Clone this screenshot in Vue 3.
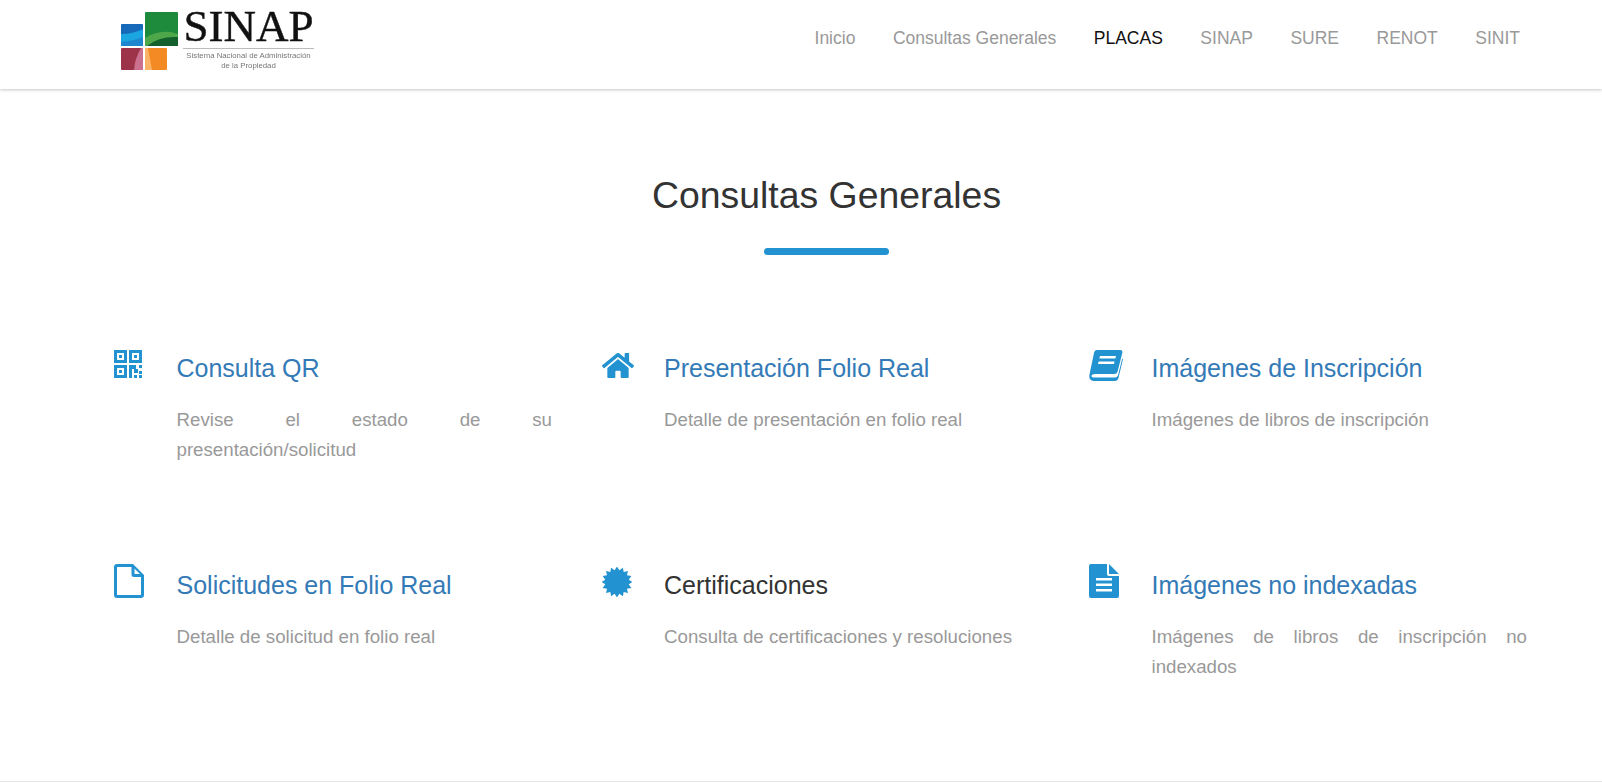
<template>
  <div class="page">
    <header class="topbar">
      <div class="logo">
        <svg class="logo-mark" viewBox="0 0 58 58" width="58" height="58">
          <rect x="24" y="0" width="33" height="34" rx="1" fill="#1d8a3c" />
          <path d="M24 34V26Q40 16 57 22V34Z" fill="#4ea84a" />
          <path d="M26 34Q38 24 57 25V34Z" fill="#14602c" />
          <rect x="0" y="12" width="22" height="22" rx="1" fill="#1669b8" />
          <path d="M0 22Q12 22 22 17V26Q10 30 0 34Z" fill="#1ba6e2" />
          <path d="M0 30Q12 29 22 25V34H0Z" fill="#1e86cc" />
          <rect x="0" y="36" width="22" height="22" rx="1" fill="#9c3348" />
          <path d="M13 58Q14 46 20 36H22V58Z" fill="#cc7090" />
          <rect x="24" y="36" width="22" height="22" rx="1" fill="#f38a24" />
          <path d="M24 36H27L31 58H24Z" fill="#fbb367" />
        </svg>
        <div class="logo-text">
          <span class="logo-name">SINAP</span>
          <span class="logo-sub">Sistema Nacional de Administración<br />de la Propiedad</span>
        </div>
      </div>
      <nav class="menu">
        <a v-for="link in links" :key="link" class="menu-link" :class="{ active: link === 'PLACAS' }">{{ link }}</a>
      </nav>
    </header>

    <main class="content">
      <h1 class="title">Consultas Generales</h1>
      <div class="title-bar"></div>

      <section class="services">
        <article class="service">
          <svg class="icon qr" viewBox="0 0 28 28">
            <path d="M0 0H13V13H0ZM3 3V10H10V3ZM5 5H8V8H5ZM15 0H28V13H15ZM18 3V10H25V3ZM20 5H23V8H20ZM0 15H13V28H0ZM3 18V25H10V18ZM5 20H8V23H5ZM15 15H22V19H24V23H20V19H18V28H15ZM25 15H28V18H25ZM25 21H28V24H25ZM20 25H23V28H20ZM25 25H28V28H25Z" fill-rule="evenodd" />
          </svg>
          <div>
            <h2 class="service-title">Consulta QR</h2>
            <p class="service-text"><span class="full-line">Revise el estado de su</span> presentación/solicitud</p>
          </div>
        </article>

        <article class="service">
          <svg class="icon home" viewBox="0 32 576 448">
            <path d="M280.37 148.26L96 300.11V464a16 16 0 0 0 16 16l112.06-.29a16 16 0 0 0 15.92-16V368a16 16 0 0 1 16-16h64a16 16 0 0 1 16 16v95.64a16 16 0 0 0 16 16.05L464 480a16 16 0 0 0 16-16V300L295.67 148.26a12.19 12.19 0 0 0-15.3 0zM571.6 251.47L488 182.56V44.05a12 12 0 0 0-12-12h-56a12 12 0 0 0-12 12v72.61L318.47 43a48 48 0 0 0-61 0L4.34 251.47a12 12 0 0 0-1.6 16.9l25.5 31A12 12 0 0 0 45.15 301l235.22-193.74a12.19 12.19 0 0 1 15.3 0L530.9 301a12 12 0 0 0 16.9-1.6l25.5-31a12 12 0 0 0-1.7-16.93z" />
          </svg>
          <div>
            <h2 class="service-title">Presentación Folio Real</h2>
            <p class="service-text">Detalle de presentación en folio real</p>
          </div>
        </article>

        <article class="service">
          <svg class="icon book" viewBox="0 0 34 31">
            <path d="M8 0H31Q34 0 33.3 3L28.6 21.5Q28 24 25 24H5.5Q3.4 24 2.5 25.6 2 27 4 27.5H26Q28 27.5 29 25.5L33.2 8.5 34 9 29.6 27.5Q29 31 25.5 31H5Q1.5 31 .5 28 0 26 .7 23.5L5 3Q5.6 0 8 0ZM11 6 10.4 8.5H26.4L27 6ZM9.6 11.5 9 14H25L25.6 11.5Z" fill-rule="evenodd" />
          </svg>
          <div>
            <h2 class="service-title">Imágenes de Inscripción</h2>
            <p class="service-text">Imágenes de libros de inscripción</p>
          </div>
        </article>

        <article class="service">
          <svg class="icon file" viewBox="0 0 30 34">
            <path d="M3 0H19L30 11V31Q30 34 27 34H3Q0 34 0 31V3Q0 0 3 0ZM3.5 3Q3 3 3 3.5V30.5Q3 31 3.5 31H26.5Q27 31 27 30.5V13H20Q17.5 13 17.5 10.5V3ZM20.5 4.5V10H26Z" fill-rule="evenodd" />
          </svg>
          <div>
            <h2 class="service-title">Solicitudes en Folio Real</h2>
            <p class="service-text">Detalle de solicitud en folio real</p>
          </div>
        </article>

        <article class="service">
          <svg class="icon cert" viewBox="0 0 30 30">
            <path :d="starPath" />
          </svg>
          <div>
            <h2 class="service-title dark">Certificaciones</h2>
            <p class="service-text">Consulta de certificaciones y resoluciones</p>
          </div>
        </article>

        <article class="service">
          <svg class="icon doc" viewBox="0 0 30 34">
            <path d="M2 0H18V10Q18 12 20 12H30V32Q30 34 28 34H2Q0 34 0 32V2Q0 0 2 0ZM7 14V16.5H23V14ZM7 19.5V22H23V19.5ZM7 25V27.5H23V25ZM20 0 30 10H20Z" fill-rule="evenodd" />
          </svg>
          <div>
            <h2 class="service-title">Imágenes no indexadas</h2>
            <p class="service-text justify">Imágenes de libros de inscripción no indexados</p>
          </div>
        </article>
      </section>
    </main>
  </div>
</template>

<script setup>
import { computed } from 'vue'

const links = ['Inicio', 'Consultas Generales', 'PLACAS', 'SINAP', 'SURE', 'RENOT', 'SINIT']

// 16 point badge for the certificate icon
const starPath = computed(() => {
  const points = []
  for (let i = 0; i < 32; i++) {
    const r = i % 2 === 0 ? 15.5 : 12
    const a = (Math.PI * i) / 16
    points.push(`${(15 + r * Math.sin(a)).toFixed(2)} ${(15 - r * Math.cos(a)).toFixed(2)}`)
  }
  return `M${points.join('L')}Z`
})
</script>

<style scoped>
.page {
  height: 782px;
  overflow: hidden;
  box-sizing: border-box;
  border-bottom: 1px solid #e7e7e7;
  font-family: "Liberation Sans", Arial, sans-serif;
  background: #fff;
}

.topbar {
  height: 89px;
  box-sizing: border-box;
  padding: 12px 82px 0 121px;
  display: flex;
  justify-content: space-between;
  align-items: flex-start;
  box-shadow: 0 1px 3px rgba(0, 0, 0, 0.22);
}

.logo {
  display: flex;
  gap: 4px;
  filter: blur(0.4px);
}

.logo-text {
  display: flex;
  flex-direction: column;
  align-items: center;
  width: 131px;
}

.logo-name {
  width: 100%;
  text-align: center;
  font-family: "Liberation Serif", serif;
  font-size: 45px;
  line-height: 29px;
  padding-bottom: 7px;
  color: #111;
  -webkit-text-stroke: 0.4px #111;
  border-bottom: 1px solid #bbb;
}

.logo-sub {
  margin-top: 2px;
  font-size: 7.8px;
  line-height: 9.5px;
  color: #777;
  text-align: center;
  white-space: nowrap;
}

.menu {
  display: flex;
  gap: 37.5px;
  padding-top: 14px;
}

.menu-link {
  font-size: 17.5px;
  line-height: 24px;
  color: #999;
}

.menu-link.active {
  color: #111;
}

.content {
  width: 1425px;
  margin-left: 114px;
}

.title {
  margin: 84px 0 0;
  font-size: 37.4px;
  line-height: 44px;
  font-weight: 400;
  color: #333;
  text-align: center;
}

.title-bar {
  width: 125px;
  height: 7px;
  margin: 31px auto 0;
  border-radius: 4px;
  background: #2392d0;
}

.services {
  display: grid;
  grid-template-columns: repeat(3, 438px);
  column-gap: 49.5px;
  grid-auto-rows: 217px;
  margin-top: 95px;
}

.service {
  display: grid;
  grid-template-columns: 62.5px 375.5px;
  align-items: start;
}

.icon {
  fill: #2392d0;
  display: block;
}

.qr { width: 28px; height: 28px; }
.home { width: 32px; height: 25px; margin-top: 3px; }
.book { width: 34px; height: 31px; }
.file { width: 30px; height: 34px; margin-top: -3px; }
.cert { width: 30px; height: 30px; }
.doc { width: 30px; height: 34px; margin-top: -3px; }

.service-title {
  margin: 3px 0 0;
  font-size: 25px;
  line-height: 30px;
  font-weight: 400;
  color: #337ab7;
}

.service-title.dark {
  color: #333;
}

.service-text {
  margin: 22px 0 0;
  font-size: 18.7px;
  line-height: 30px;
  color: #999;
}

.justify {
  text-align: justify;
}

.full-line {
  display: block;
  text-align: justify;
  text-align-last: justify;
}
</style>

<style>
html, body {
  margin: 0;
  overflow: hidden;
}
</style>
